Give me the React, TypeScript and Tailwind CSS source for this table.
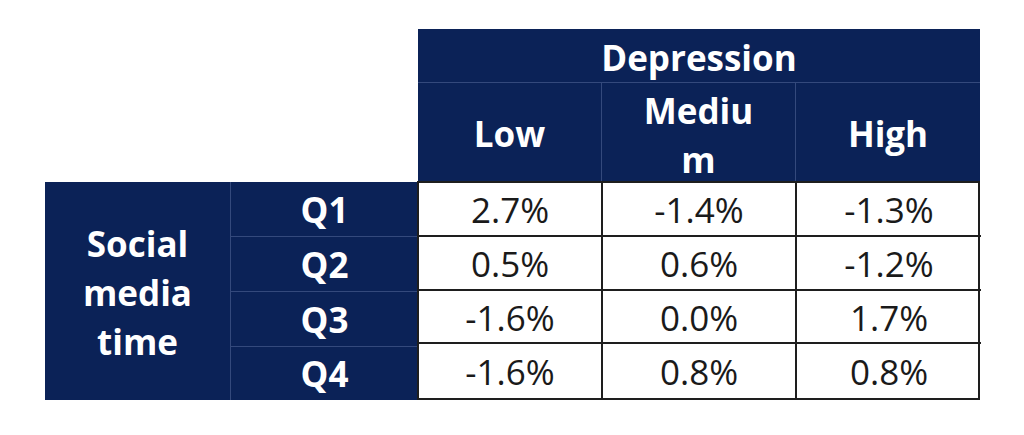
const navy = "bg-[#0b2257]";

const rows = [
  { q: "Q1", vals: ["2.7%", "-1.4%", "-1.3%"] },
  { q: "Q2", vals: ["0.5%", "0.6%", "-1.2%"] },
  { q: "Q3", vals: ["-1.6%", "0.0%", "1.7%"] },
  { q: "Q4", vals: ["-1.6%", "0.8%", "0.8%"] },
];

export default function App() {
  return (
    <div
      className="w-[1024px] h-[435px] bg-white pl-[45px] pt-[29px]"
      style={{ fontFamily: '"Open Sans", "Liberation Sans", sans-serif' }}
    >
      <div className="grid grid-cols-[186px_187px_184px_194px_184px] grid-rows-[54px_99px_55px_55px_55px_53px]">
        {/* header */}
        <div className="col-start-3 col-span-3 row-start-1 flex items-center justify-center pt-[5px] bg-[#0b2257] text-white font-bold text-[35px] border-b border-[#34497c]">
          Depression
        </div>
        <div className={`col-start-3 row-start-2 flex items-center justify-center pt-[4px] ${navy} text-white font-bold text-[35px] border-r border-[#34497c]`}>
          Low
        </div>
        <div className={`col-start-4 row-start-2 flex items-center justify-center pt-[4px] ${navy} text-white font-bold text-[35px] leading-[49px] text-center border-r border-[#34497c]`}>
          Mediu
          <br />m
        </div>
        <div className={`col-start-5 row-start-2 flex items-center justify-center pt-[4px] ${navy} text-white font-bold text-[35px]`}>
          High
        </div>

        {/* row header */}
        <div className={`col-start-1 row-start-3 row-span-4 flex items-center justify-center pt-[2px] ${navy} text-white font-bold text-[35px] leading-[49px] text-center border-r border-[#34497c]`}>
          Social
          <br />
          media
          <br />
          time
        </div>

        {rows.map((r, i) => (
          <div
            key={r.q}
            className={`col-start-2 flex items-center justify-center pt-[2px] ${navy} text-white font-bold text-[35px] ${
              i < 3 ? "border-b border-[#34497c]" : ""
            }`}
            style={{ gridRowStart: i + 3 }}
          >
            {r.q}
          </div>
        ))}

        {/* data */}
        <div className="col-start-3 col-span-3 row-start-3 row-span-4 grid grid-cols-[184px_194px_184px] grid-rows-4 border-2 border-[#1e1e1e] -ml-px -mt-px">
          {rows.map((r, i) =>
            r.vals.map((v, j) => (
              <div
                key={`${i}-${j}`}
                className={`flex items-center justify-center pt-[3px] text-[35px] text-[#1a1a1a] border-[#1e1e1e] ${
                  j < 2 ? "border-r-2" : ""
                } ${i < 3 ? "border-b-2" : ""}`}
              >
                {v}
              </div>
            ))
          )}
        </div>
      </div>
    </div>
  );
}
